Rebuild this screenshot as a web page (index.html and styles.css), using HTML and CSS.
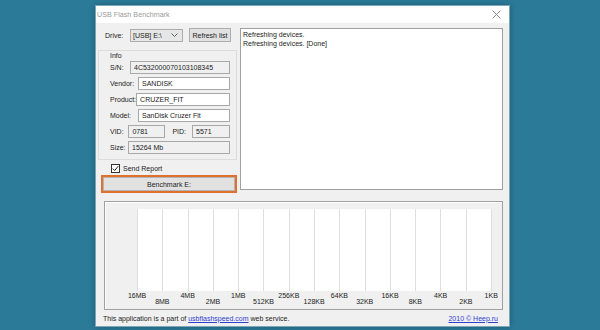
FILE: index.html
```html
<!DOCTYPE html>
<html lang="en">
<head>
  <meta charset="UTF-8" />
  <title>USB Flash Benchmark</title>
  <link rel="stylesheet" href="styles.css">
</head>
<body>
  <div class="window">
    <div class="titlebar">
      <span class="title">USB Flash Benchmark</span>
      <span class="close">
        <svg width="9" height="9" viewBox="0 0 9 9"><path d="M0.5 0.5 L8.5 8.5 M8.5 0.5 L0.5 8.5" stroke="#8a8a8a" stroke-width="1" fill="none"/></svg>
      </span>
    </div>

    <div class="top">
      <div class="left">
        <div class="drive-row">
          <span class="drive-label">Drive:</span>
          <div class="combo">
            <span>[USB] E:\</span>
            <svg width="7" height="4" viewBox="0 0 7 4"><path d="M0.5 0.5 L3.5 3.5 L6.5 0.5" stroke="#555" stroke-width="0.9" fill="none"/></svg>
          </div>
          <div class="btn refresh">Refresh list</div>
        </div>

        <div class="group">
          <div class="group-title">Info</div>
          <div class="row">
            <span class="lbl">S/N:</span>
            <div class="box ro w-sn">4C532000070103108345</div>
          </div>
          <div class="row">
            <span class="lbl">Vendor:</span>
            <div class="box w-vendor">SANDISK</div>
          </div>
          <div class="row">
            <span class="lbl">Product:</span>
            <div class="box w-product">CRUZER_FIT</div>
          </div>
          <div class="row">
            <span class="lbl">Model:</span>
            <div class="box w-vendor">SanDisk Cruzer Fit</div>
          </div>
          <div class="row">
            <span class="lbl">VID:</span>
            <div class="box ro w-vid">0781</div>
            <span class="lbl pid">PID:</span>
            <div class="box ro w-pid">5571</div>
          </div>
          <div class="row">
            <span class="lbl">Size:</span>
            <div class="box ro w-size">15264 Mb</div>
          </div>
        </div>

        <div class="check-row">
          <span class="checkbox">
            <svg width="7" height="7" viewBox="0 0 7 7"><path d="M0.8 3.6 L2.7 5.5 L6.2 1.2" stroke="#222" stroke-width="1" fill="none"/></svg>
          </span>
          <span>Send Report</span>
        </div>

        <div class="bench-wrap">
          <div class="btn bench">Benchmark E:</div>
        </div>
      </div>

      <div class="log">
        <div>Refreshing devices.</div>
        <div>Refreshing devices. [Done]</div>
      </div>
    </div>

    <div class="chart">
      <div class="plot">
        <div class="col"></div><div class="col"></div><div class="col"></div><div class="col"></div>
        <div class="col"></div><div class="col"></div><div class="col"></div><div class="col"></div>
        <div class="col"></div><div class="col"></div><div class="col"></div><div class="col"></div>
        <div class="col"></div><div class="col"></div>
      </div>
      <div class="ticks">
        <span>16MB</span><span class="low">8MB</span><span>4MB</span><span class="low">2MB</span>
        <span>1MB</span><span class="low">512KB</span><span>256KB</span><span class="low">128KB</span>
        <span>64KB</span><span class="low">32KB</span><span>16KB</span><span class="low">8KB</span>
        <span>4KB</span><span class="low">2KB</span><span>1KB</span>
      </div>
    </div>

    <div class="footer">
      <span>This application is a part of <a href="#">usbflashspeed.com</a> web service.</span>
      <a href="#">2010 &copy; Heep.ru</a>
    </div>
  </div>
</body>
</html>
```

FILE: styles.css
```css
* {
  box-sizing: border-box;
}

body {
  margin: 0;
  width: 600px;
  height: 330px;
  overflow: hidden;
  background: #2b7a98;
  font-family: "Liberation Sans", Arial, sans-serif;
  font-size: 7px;
  color: #1c1c1c;
}

.window {
  width: 415px;
  height: 322px;
  margin: 5px 0 0 95px;
  background: #f0f0f0;
  border: 1px solid #7ea6b8;
  box-shadow: 0 0 6px rgba(0, 0, 0, 0.25);
}

.titlebar {
  height: 17px;
  background: #ffffff;
  display: flex;
  align-items: center;
  justify-content: space-between;
  padding: 0 8px 0 1px;
}

.title {
  font-size: 7.2px;
  color: #9a9a9a;
}

.close {
  display: flex;
}

/* top area: device panel + log */
.top {
  display: flex;
  gap: 2px;
  padding: 5px 6px 0 2px;
  height: 170px;
}

.left {
  width: 140px;
  display: flex;
  flex-direction: column;
}

.drive-row {
  display: flex;
  align-items: center;
  height: 14px;
}

.drive-label {
  margin-left: 7px;
  width: 25px;
}

.combo {
  width: 53px;
  height: 13px;
  background: #e6e6e6;
  border: 1px solid #acacac;
  display: flex;
  align-items: center;
  justify-content: space-between;
  padding: 0 4px 0 2px;
}

.btn {
  background: #e1e1e1;
  border: 1px solid #adadad;
  display: flex;
  align-items: center;
  justify-content: center;
}

.refresh {
  width: 42px;
  height: 14px;
  margin-left: 6px;
}

.group {
  margin-top: 8px;
  width: 139px;
  border: 1px solid #dcdcdc;
  padding: 1px 6px 5px 11px;
  display: flex;
  flex-direction: column;
  gap: 3px;
}

.group-title {
  height: 8px;
  line-height: 8px;
  margin-bottom: -2px;
}

.row {
  display: flex;
  align-items: center;
  justify-content: space-between;
  height: 13px;
}

.lbl {
  white-space: nowrap;
}

.box {
  height: 13px;
  background: #ffffff;
  border: 1px solid #a8a8a8;
  padding: 0 3px;
  display: flex;
  align-items: center;
  white-space: nowrap;
}

.box.ro {
  background: #f0f0f0;
}

.w-sn { width: 100px; }
.w-vendor { width: 92px; }
.w-product { width: 94px; }
.w-size { width: 102px; }
.w-vid { width: 37px; margin-left: auto; }
.w-pid { width: 38px; }
.pid { margin-left: 7px; margin-right: 6px; }

.check-row {
  display: flex;
  align-items: center;
  gap: 3px;
  margin-top: 4px;
  margin-left: 13px;
  height: 9px;
}

.checkbox {
  width: 9px;
  height: 9px;
  border: 1px solid #333;
  background: #ffffff;
  display: flex;
  align-items: center;
  justify-content: center;
}

.bench-wrap {
  margin: 2px 0 0 3px;
  width: 136px;
  height: 18px;
  border: 2px solid #e0702e;
}

.bench {
  height: 100%;
  border-color: #b5b5b5;
}

.log {
  flex: 1;
  height: 162px;
  background: #ffffff;
  border: 1px solid #a0a0a0;
  padding: 2px 2px;
  line-height: 8.5px;
}

/* speed chart */
.chart {
  margin: 8px 6px 0 8px;
  height: 109px;
  border: 1px solid #a0a0a0;
  box-shadow: inset 1px 1px 0 #ffffff;
  padding: 7px 0 0 32px;
}

.plot {
  width: 355px;
  height: 82px;
  display: flex;
  background: #ffffff;
  border-right: 1px solid #dedede;
}

.col {
  flex: 1;
  border-left: 1px solid #dedede;
}

.ticks {
  display: flex;
  margin-left: -12.6px;
  height: 16px;
}

.ticks span {
  width: 25.3px;
  flex: none;
  text-align: center;
  white-space: nowrap;
  padding-top: 1px;
}

.ticks span.low {
  padding-top: 7px;
}

.footer {
  display: flex;
  justify-content: space-between;
  align-items: center;
  height: 12px;
  margin-top: 2px;
  padding: 0 11px 0 7px;
}

.footer a {
  color: #2f3fd0;
}
```
